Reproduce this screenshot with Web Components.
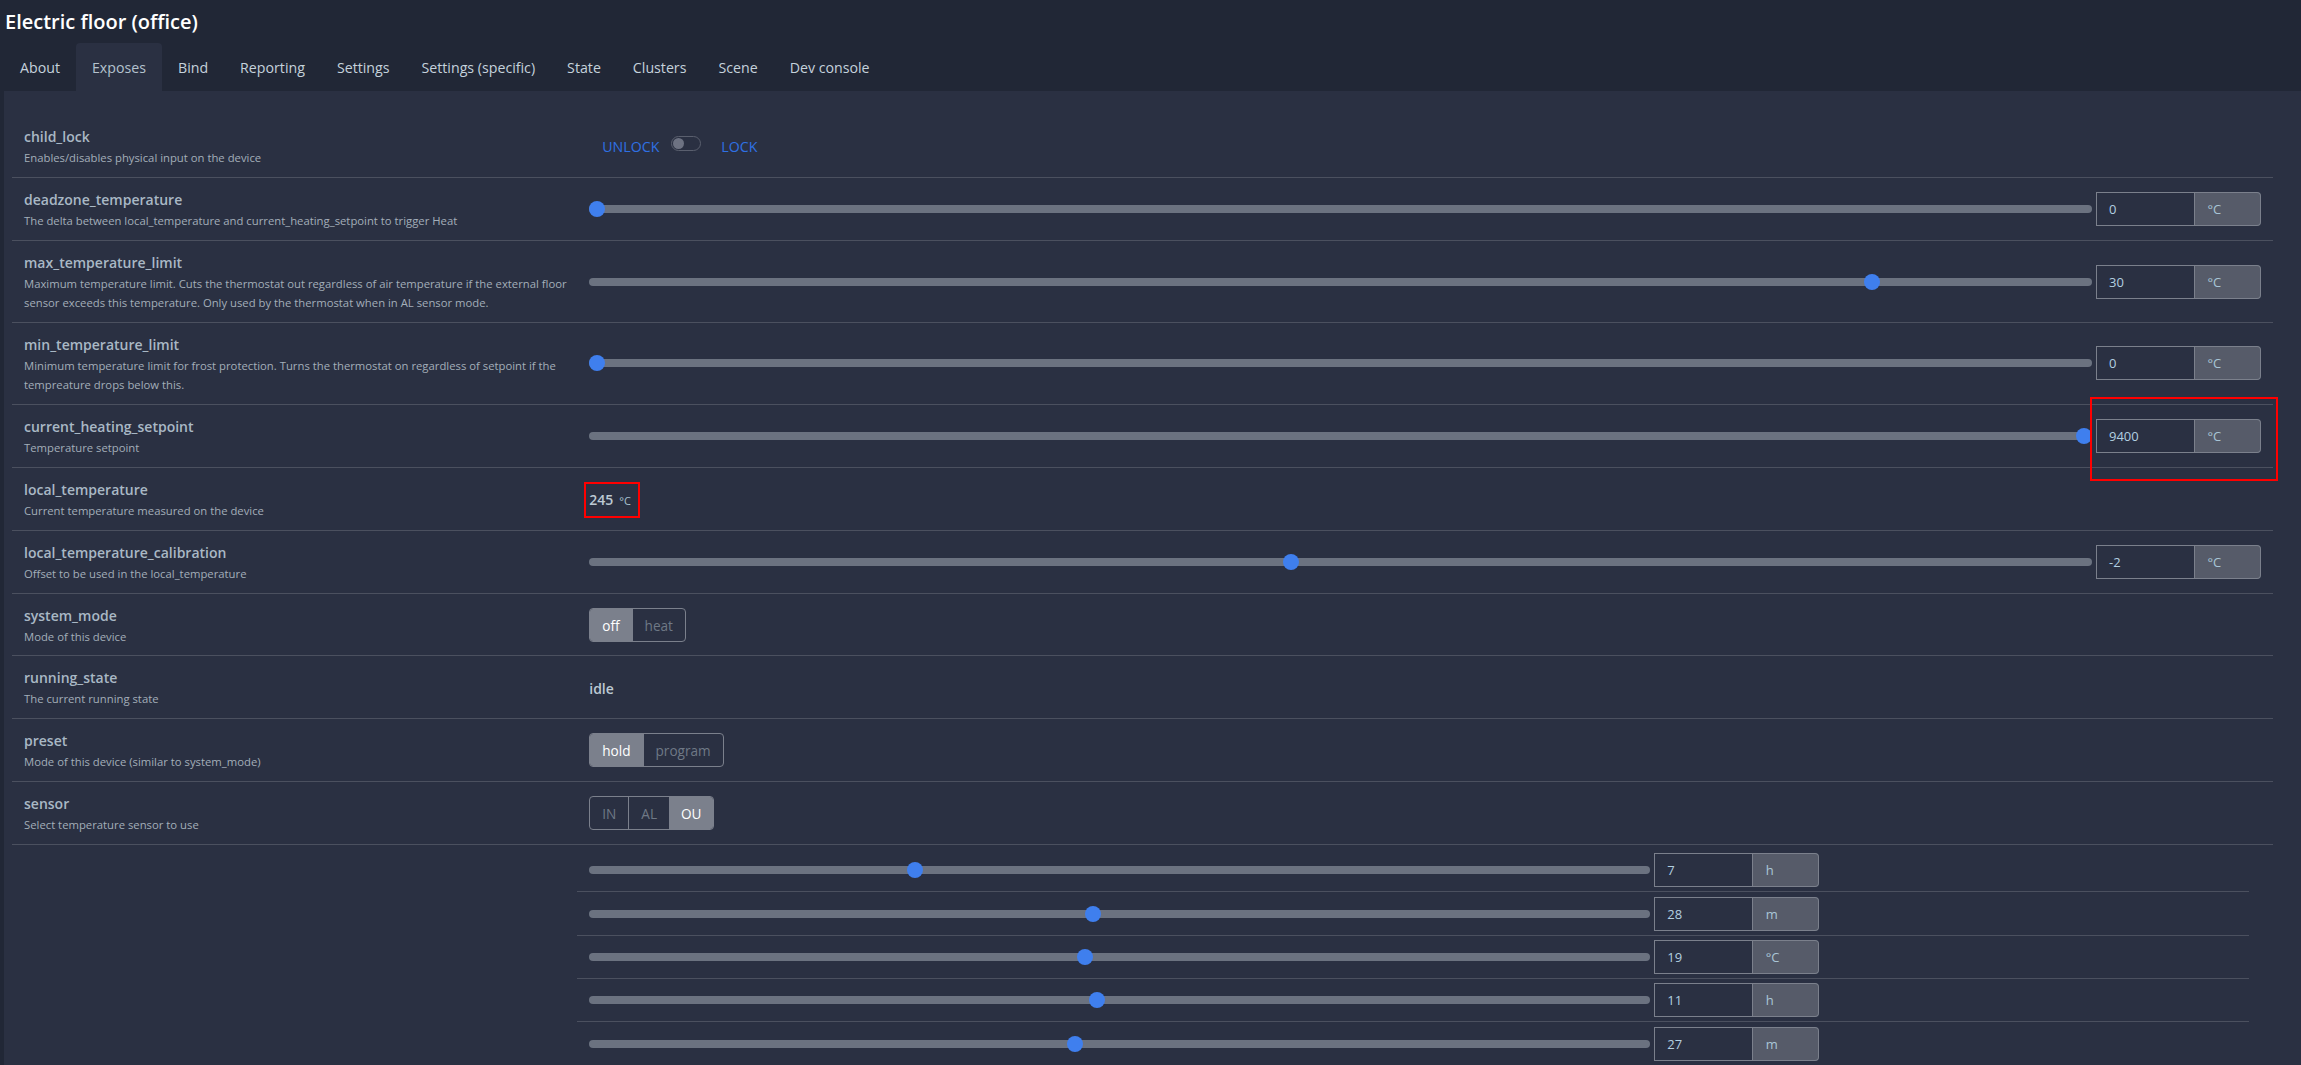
<!DOCTYPE html>
<html>
<head>
<meta charset="utf-8">
<title>Electric floor (office)</title>
<style>
    html, body { margin: 0; height: 100%; overflow: hidden; }
    body {
        background: #212736;
        color: #c3d0da;
        font-family: "Open Sans", "Liberation Sans", sans-serif;
        font-size: 14px;
    }
</style>
</head>
<body>
<device-page>
    <span slot="title">Electric floor (office)</span>
    <tab-item slot="tabs">About</tab-item>
    <tab-item slot="tabs" active>Exposes</tab-item>
    <tab-item slot="tabs">Bind</tab-item>
    <tab-item slot="tabs">Reporting</tab-item>
    <tab-item slot="tabs">Settings</tab-item>
    <tab-item slot="tabs">Settings (specific)</tab-item>
    <tab-item slot="tabs">State</tab-item>
    <tab-item slot="tabs">Clusters</tab-item>
    <tab-item slot="tabs">Scene</tab-item>
    <tab-item slot="tabs">Dev console</tab-item>

    <expose-row name="child_lock" desc="Enables/disables physical input on the device">
        <lock-switch></lock-switch>
    </expose-row>
    <expose-row name="deadzone_temperature" desc="The delta between local_temperature and current_heating_setpoint to trigger Heat">
        <range-field min="0" max="5" value="0" unit="°C"></range-field>
    </expose-row>
    <expose-row name="max_temperature_limit" desc="Maximum temperature limit. Cuts the thermostat out regardless of air temperature if the external floor sensor exceeds this temperature. Only used by the thermostat when in AL sensor mode.">
        <range-field min="0" max="35" value="30" unit="°C"></range-field>
    </expose-row>
    <expose-row name="min_temperature_limit" desc="Minimum temperature limit for frost protection. Turns the thermostat on regardless of setpoint if the tempreature drops below this.">
        <range-field min="0" max="35" value="0" unit="°C"></range-field>
    </expose-row>
    <expose-row name="current_heating_setpoint" desc="Temperature setpoint">
        <range-field min="0" max="9400" value="9400" unit="°C" marked></range-field>
    </expose-row>
    <expose-row name="local_temperature" desc="Current temperature measured on the device">
        <state-value unit="°C" marked>245</state-value>
    </expose-row>
    <expose-row name="local_temperature_calibration" desc="Offset to be used in the local_temperature">
        <range-field min="-30" max="30" value="-2" unit="°C"></range-field>
    </expose-row>
    <expose-row name="system_mode" desc="Mode of this device">
        <option-group>
            <option-btn on>off</option-btn>
            <option-btn>heat</option-btn>
        </option-group>
    </expose-row>
    <expose-row name="running_state" desc="The current running state">
        <state-value>idle</state-value>
    </expose-row>
    <expose-row name="preset" desc="Mode of this device (similar to system_mode)">
        <option-group>
            <option-btn on>hold</option-btn>
            <option-btn>program</option-btn>
        </option-group>
    </expose-row>
    <expose-row name="sensor" desc="Select temperature sensor to use">
        <option-group>
            <option-btn>IN</option-btn>
            <option-btn>AL</option-btn>
            <option-btn on>OU</option-btn>
        </option-group>
    </expose-row>
    <expose-row nested>
        <sub-row><range-field min="0" max="23" value="7" unit="h"></range-field></sub-row>
        <sub-row><range-field min="0" max="59" value="28" unit="m"></range-field></sub-row>
        <sub-row><range-field min="5" max="35" value="19" unit="°C"></range-field></sub-row>
        <sub-row><range-field min="0" max="23" value="11" unit="h"></range-field></sub-row>
        <sub-row><range-field min="0" max="59" value="27" unit="m"></range-field></sub-row>
    </expose-row>
</device-page>

<script>
class DevicePage extends HTMLElement {
    connectedCallback() {
        this.attachShadow({ mode: 'open' });
        this.shadowRoot.innerHTML = `
        <style>
            :host { display: block; }
            h1 {
                margin: 0;
                padding: 0 0 0 5px;
                height: 43px;
                line-height: 44px;
                font-size: 20px;
                font-weight: 600;
                color: #fff;
            }
            nav { display: flex; padding-left: 4px; height: 48px; }
            main { margin-left: 4px; padding: 24.4px 28px 0 8px; background: #2a3042; }
        </style>
        <h1><slot name="title"></slot></h1>
        <nav><slot name="tabs"></slot></nav>
        <main><slot></slot></main>
        `;
    }
}

class TabItem extends HTMLElement {
    connectedCallback() {
        this.attachShadow({ mode: 'open' });
        this.shadowRoot.innerHTML = `
        <style>
            :host {
                display: block;
                padding: 0 16px;
                line-height: 50px;
                font-size: 14.2px;
                color: #c5d2dc;
                border-radius: 4px 4px 0 0;
            }
            :host([active]) { background: #2a3042; color: #b4c2ce; }
        </style>
        <slot></slot>
        `;
    }
}

class ExposeRow extends HTMLElement {
    connectedCallback() {
        this.attachShadow({ mode: 'open' });
        const name = this.getAttribute('name') || '';
        const desc = this.getAttribute('desc') || '';
        this.shadowRoot.innerHTML = `
        <style>
            :host {
                display: grid;
                grid-template-columns: 25% 75%;
                border-bottom: 1px solid #4b505f;
                box-sizing: border-box;
            }
            :host([nested]) { border-bottom: 0; }
            .label { padding: 11px 0 9px 12px; }
            .name { line-height: 22px; margin-bottom: 1px; font-size: 14px; font-weight: 600; color: #a9b8c5; }
            .desc { line-height: 18.9px; font-size: 11.3px; color: #a3aeb9; }
            .control { display: flex; align-items: center; padding: 0 12px; min-width: 0; }
            :host([nested]) .control { display: block; padding: 0 24px 0 0; }
        </style>
        <div class="label">
            <div class="name">${name}</div>
            <div class="desc">${desc}</div>
        </div>
        <div class="control"><slot></slot></div>
        `;
    }
}

class SubRow extends HTMLElement {
    connectedCallback() {
        this.attachShadow({ mode: 'open' });
        this.shadowRoot.innerHTML = `
        <style>
            :host {
                display: block;
                padding: 4.4px 0 4px 12px;
                border-bottom: 1px solid #4b505f;
            }
            :host(:first-child) { padding-top: 8px; }
            .inner { width: 1230px; display: flex; }
        </style>
        <div class="inner"><slot></slot></div>
        `;
    }
}

class RangeField extends HTMLElement {
    connectedCallback() {
        this.attachShadow({ mode: 'open' });
        const min = this.getAttribute('min');
        const max = this.getAttribute('max');
        const value = this.getAttribute('value');
        const unit = this.getAttribute('unit');
        const field = `<div class="value">${value}</div><div class="unit">${unit}</div>`;
        this.shadowRoot.innerHTML = `
        <style>
            :host { display: flex; flex: 1; align-items: center; gap: 4px; }
            input {
                -webkit-appearance: none;
                appearance: none;
                flex: 1;
                min-width: 0;
                margin: 0;
                height: 16px;
                background: transparent;
            }
            input::-webkit-slider-runnable-track { height: 8px; border-radius: 4px; background: #6b7280; }
            input::-webkit-slider-thumb {
                -webkit-appearance: none;
                width: 16px;
                height: 16px;
                margin-top: -4px;
                border-radius: 50%;
                background: #3f7fee;
            }
            .field { display: flex; width: 165px; height: 34px; box-sizing: border-box; font-size: 13px; line-height: 32px; }
            .value {
                width: 99px;
                box-sizing: border-box;
                padding-left: 12px;
                border: 1px solid #7b808c;
                color: #b2cfe0;
            }
            .unit {
                flex: 1;
                padding-left: 12.5px;
                border: 1px solid #7b808c;
                border-left: 0;
                border-radius: 0 4px 4px 0;
                background: #565b69;
                color: #a9c5d6;
            }
        </style>
        <input type="range" min="${min}" max="${max}" value="${value}" tabindex="-1">
        ${this.hasAttribute('marked')
            ? `<red-box style="--t:-21.5px;--l:-6px;--r:-17px;--b:-28.5px"><div class="field">${field}</div></red-box>`
            : `<div class="field">${field}</div>`}
        `;
    }
}

class StateValue extends HTMLElement {
    connectedCallback() {
        this.attachShadow({ mode: 'open' });
        const unit = this.getAttribute('unit');
        const body = `<b><slot></slot></b>${unit ? `<small>${unit}</small>` : ''}`;
        this.shadowRoot.innerHTML = `
        <style>
            :host { display: inline-block; line-height: 20px; color: #bcc9d3; margin-top: 3px; }
            b { font-weight: 600; font-size: 14px; }
            small { font-size: 11px; margin-left: 6px; color: #a9c0d0; }
        </style>
        ${this.hasAttribute('marked')
            ? `<red-box style="--t:-8px;--l:-5px;--r:-9px;--b:-7px">${body}</red-box>`
            : body}
        `;
    }
}

class RedBox extends HTMLElement {
    connectedCallback() {
        this.attachShadow({ mode: 'open' });
        this.shadowRoot.innerHTML = `
        <style>
            :host { display: inline-block; position: relative; }
            i {
                position: absolute;
                top: var(--t); left: var(--l); right: var(--r); bottom: var(--b);
                border: 2px solid #f00;
                pointer-events: none;
            }
        </style>
        <slot></slot><i></i>
        `;
    }
}

class OptionGroup extends HTMLElement {
    connectedCallback() {
        this.attachShadow({ mode: 'open' });
        this.shadowRoot.innerHTML = `
        <style>
            :host {
                display: inline-flex;
                height: 34px;
                box-sizing: border-box;
                border: 1px solid #7b808c;
                border-radius: 4px;
                overflow: hidden;
            }
        </style>
        <slot></slot>
        `;
    }
}

class OptionBtn extends HTMLElement {
    connectedCallback() {
        this.attachShadow({ mode: 'open' });
        this.shadowRoot.innerHTML = `
        <style>
            :host {
                display: block;
                padding: 0 12px;
                line-height: 33px;
                font-size: 13.6px;
                color: #6f7986;
                border-left: 1px solid #7b808c;
            }
            :host(:first-child) { border-left: 0; }
            :host([on]) { background: #7b808c; color: #fff; border-left: 0; }
        </style>
        <slot></slot>
        `;
    }
}

class LockSwitch extends HTMLElement {
    connectedCallback() {
        this.attachShadow({ mode: 'open' });
        this.shadowRoot.innerHTML = `
        <style>
            :host { display: flex; align-items: center; padding-left: 13px; font-size: 14.2px; color: #2f70e4; }
            .track {
                width: 30px;
                height: 15px;
                margin: -5px 20px 0 12px;
                box-sizing: border-box;
                border: 1px solid #5a5f6e;
                border-radius: 8px;
                padding: 1px;
            }
            .knob { width: 11px; height: 11px; border-radius: 50%; background: #6d7282; }
        </style>
        <span>UNLOCK</span>
        <div class="track"><div class="knob"></div></div>
        <span>LOCK</span>
        `;
    }
}

customElements.define('device-page', DevicePage);
customElements.define('tab-item', TabItem);
customElements.define('expose-row', ExposeRow);
customElements.define('sub-row', SubRow);
customElements.define('range-field', RangeField);
customElements.define('state-value', StateValue);
customElements.define('red-box', RedBox);
customElements.define('option-group', OptionGroup);
customElements.define('option-btn', OptionBtn);
customElements.define('lock-switch', LockSwitch);
</script>
</body>
</html>
